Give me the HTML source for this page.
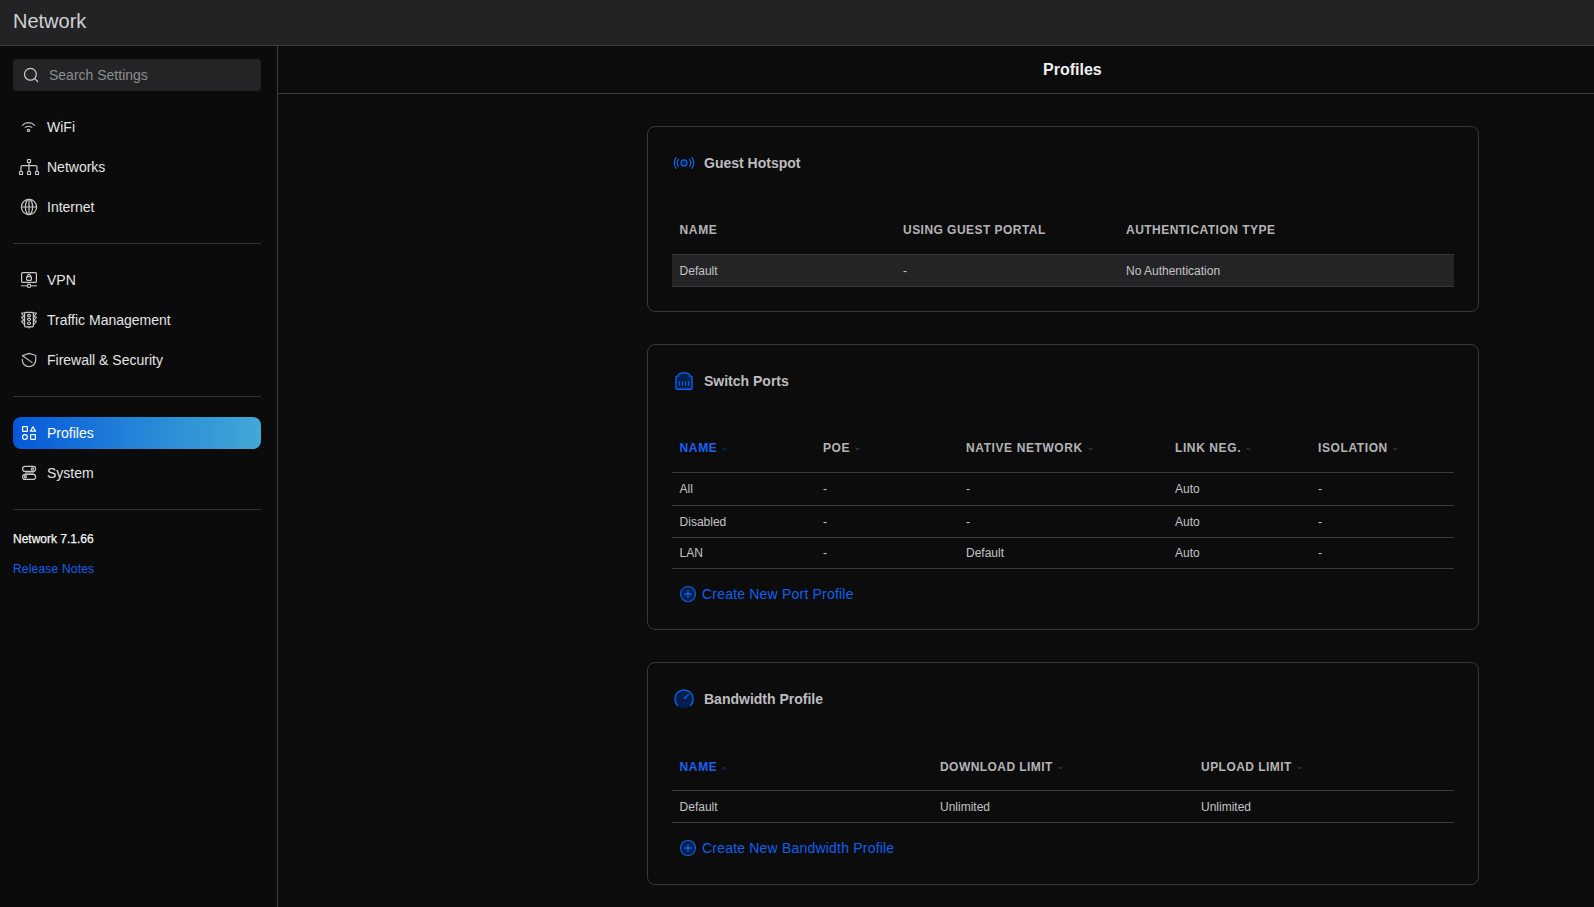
<!DOCTYPE html>
<html><head><meta charset="utf-8">
<style>
*{box-sizing:border-box;margin:0;padding:0}
html,body{width:1594px;height:907px;overflow:hidden;background:#0c0c0c;font-family:"Liberation Sans",sans-serif;color:#c8c8c8}
.abs{position:absolute}
#hdr{left:0;top:0;width:1594px;height:46px;background:#232325;border-bottom:1px solid #3b3b40}
#hdr .t{left:13px;top:9px;font-size:20px;color:#d0d1d4;line-height:24px}
#side{left:0;top:46px;width:278px;height:861px;background:#0b0b0b;border-right:1px solid #3b3b40}
#search{left:13px;top:59px;width:248px;height:32px;background:#242426;border-radius:4px}
#search .ph{left:36px;top:8px;font-size:14px;line-height:16px;color:#8c8d90}
.nav{left:13px;width:248px;height:32px;font-size:14px;line-height:32px;color:#e4e4e6}
.nav span{position:absolute;left:34px;top:0}
.nav svg{position:absolute;left:6px;top:8px}
.div{left:13px;width:248px;height:1px;background:#343438}
#active{background:linear-gradient(90deg,#0558d8 0%,#2484d8 50%,#42a8d6 100%);border-radius:8px;color:#fff}
#ver{left:13px;top:532px;font-size:12px;line-height:14px;color:#f6f6f6;-webkit-text-stroke:0.25px #f6f6f6}
#rel{left:13px;top:562px;font-size:12px;line-height:14px;color:#0f60f0;letter-spacing:0.2px}
#mh{left:278px;top:46px;width:1316px;height:48px;border-bottom:1px solid #3b3b40}
#mh .t{left:765px;top:15px;font-size:16px;line-height:18px;font-weight:bold;color:#f0f0f0}
.card{left:647px;width:832px;border:1px solid #38383c;border-radius:8px;background:#0c0c0c}
.ct{font-size:14px;font-weight:bold;color:#bdbdc0;line-height:16px}
.th{font-size:12px;font-weight:bold;letter-spacing:0.6px;color:#b4b4b6;line-height:14px}
.th.blue{color:#1a62f0}
.td{font-size:12px;color:#c4c4c6;line-height:14px}
.line{height:1px;background:#3a3a3e}
.link{font-size:14px;line-height:16px;color:#0f60f0;letter-spacing:0.2px}
.cr{margin-left:5px;vertical-align:1px}
</style></head><body>
<div id="hdr" class="abs"><div class="t abs">Network</div></div>
<div id="side" class="abs"></div>
<div id="search" class="abs">
  
  <div class="ph abs">Search Settings</div>
</div>

<div class="nav abs" style="top:111px"><span>WiFi</span></div>
<div class="nav abs" style="top:151px"><span>Networks</span></div>
<div class="nav abs" style="top:191px"><span>Internet</span></div>
<div class="div abs" style="top:243px"></div>
<div class="nav abs" style="top:264px"><span>VPN</span></div>
<div class="nav abs" style="top:304px"><span>Traffic Management</span></div>
<div class="nav abs" style="top:344px"><span>Firewall &amp; Security</span></div>
<div class="div abs" style="top:396px"></div>
<div id="active" class="nav abs" style="top:417px"><span>Profiles</span></div>
<div class="nav abs" style="top:457px"><span>System</span></div>
<div class="div abs" style="top:509px"></div>
<div id="ver" class="abs">Network 7.1.66</div>
<div id="rel" class="abs">Release Notes</div>

<div id="mh" class="abs"><div class="t abs">Profiles</div></div>

<!-- card 1 -->
<div class="card abs" style="top:126px;height:186px"></div>
<div class="ct abs" style="left:704px;top:155px">Guest Hotspot</div>
<div class="th abs" style="left:679.6px;top:223px">NAME</div>
<div class="th abs" style="left:903px;top:223px;letter-spacing:0.46px">USING GUEST PORTAL</div>
<div class="th abs" style="left:1126px;top:223px;letter-spacing:0.47px">AUTHENTICATION TYPE</div>
<div class="abs" style="left:672px;top:254px;width:782px;height:33px;background:#242426;border-top:1px solid #38383c;border-bottom:1px solid #38383c"></div>
<div class="td abs" style="left:679.6px;top:264px">Default</div>
<div class="td abs" style="left:903px;top:264px">-</div>
<div class="td abs" style="left:1126px;top:264px">No Authentication</div>

<!-- card 2 -->
<div class="card abs" style="top:344px;height:286px"></div>
<div class="ct abs" style="left:704px;top:373px">Switch Ports</div>
<div class="th abs blue" style="left:679.6px;top:441px">NAME<svg class="cr" width="5" height="4" viewBox="0 0 5 4"><path d="M0.5 3.3 L2.5 1.1 L4.5 3.3" fill="none" stroke="#0d3f9a" stroke-width="1"/></svg></div>
<div class="th abs" style="left:823px;top:441px">POE<svg class="cr" width="5" height="4" viewBox="0 0 5 4"><path d="M0.5 0.7 L2.5 2.9 L4.5 0.7" fill="none" stroke="#4e4e52" stroke-width="1"/></svg></div>
<div class="th abs" style="left:966px;top:441px">NATIVE NETWORK<svg class="cr" width="5" height="4" viewBox="0 0 5 4"><path d="M0.5 0.7 L2.5 2.9 L4.5 0.7" fill="none" stroke="#4e4e52" stroke-width="1"/></svg></div>
<div class="th abs" style="left:1175px;top:441px">LINK NEG.<svg class="cr" width="5" height="4" viewBox="0 0 5 4"><path d="M0.5 0.7 L2.5 2.9 L4.5 0.7" fill="none" stroke="#4e4e52" stroke-width="1"/></svg></div>
<div class="th abs" style="left:1318px;top:441px">ISOLATION<svg class="cr" width="5" height="4" viewBox="0 0 5 4"><path d="M0.5 0.7 L2.5 2.9 L4.5 0.7" fill="none" stroke="#4e4e52" stroke-width="1"/></svg></div>
<div class="line abs" style="left:672px;top:472px;width:782px"></div>
<div class="line abs" style="left:672px;top:505px;width:782px"></div>
<div class="line abs" style="left:672px;top:537px;width:782px"></div>
<div class="line abs" style="left:672px;top:568px;width:782px"></div>
<div class="td abs" style="left:679.6px;top:482px">All</div>
<div class="td abs" style="left:823px;top:482px">-</div>
<div class="td abs" style="left:966px;top:482px">-</div>
<div class="td abs" style="left:1175px;top:482px">Auto</div>
<div class="td abs" style="left:1318px;top:482px">-</div>
<div class="td abs" style="left:679.6px;top:515px">Disabled</div>
<div class="td abs" style="left:823px;top:515px">-</div>
<div class="td abs" style="left:966px;top:515px">-</div>
<div class="td abs" style="left:1175px;top:515px">Auto</div>
<div class="td abs" style="left:1318px;top:515px">-</div>
<div class="td abs" style="left:679.6px;top:546px">LAN</div>
<div class="td abs" style="left:823px;top:546px">-</div>
<div class="td abs" style="left:966px;top:546px">Default</div>
<div class="td abs" style="left:1175px;top:546px">Auto</div>
<div class="td abs" style="left:1318px;top:546px">-</div>
<div class="link abs" style="left:702px;top:586px">Create New Port Profile</div>

<!-- card 3 -->
<div class="card abs" style="top:662px;height:223px"></div>
<div class="ct abs" style="left:704px;top:691px">Bandwidth Profile</div>
<div class="th abs blue" style="left:679.6px;top:760px">NAME<svg class="cr" width="5" height="4" viewBox="0 0 5 4"><path d="M0.5 3.3 L2.5 1.1 L4.5 3.3" fill="none" stroke="#0d3f9a" stroke-width="1"/></svg></div>
<div class="th abs" style="left:940px;top:760px;letter-spacing:0.44px">DOWNLOAD LIMIT<svg class="cr" width="5" height="4" viewBox="0 0 5 4"><path d="M0.5 0.7 L2.5 2.9 L4.5 0.7" fill="none" stroke="#4e4e52" stroke-width="1"/></svg></div>
<div class="th abs" style="left:1201px;top:760px;letter-spacing:0.46px">UPLOAD LIMIT<svg class="cr" width="5" height="4" viewBox="0 0 5 4"><path d="M0.5 0.7 L2.5 2.9 L4.5 0.7" fill="none" stroke="#4e4e52" stroke-width="1"/></svg></div>
<div class="line abs" style="left:672px;top:790px;width:782px"></div>
<div class="line abs" style="left:672px;top:822px;width:782px"></div>
<div class="td abs" style="left:679.6px;top:800px">Default</div>
<div class="td abs" style="left:940px;top:800px">Unlimited</div>
<div class="td abs" style="left:1201px;top:800px">Unlimited</div>
<div class="link abs" style="left:702px;top:840px">Create New Bandwidth Profile</div>

<svg class="abs" style="left:0;top:0" width="278" height="907" viewBox="0 0 278 907" fill="none" stroke="#c9c9cc" stroke-width="1.2" stroke-linecap="round" stroke-linejoin="round">
 <!-- search -->
 <circle cx="30.4" cy="74.3" r="5.9"/><path d="M34.8 78.7 L37.6 81.5"/>
 <!-- wifi -->
 <path d="M22.4 125.3 A8.4 8.4 0 0 1 34.6 125.3" stroke-width="1.1"/><path d="M25.2 127.4 A6 6 0 0 1 31.8 127.4" stroke-width="1.1"/><circle cx="28.5" cy="130.4" r="1.1"/>
 <!-- networks -->
 <rect x="27.5" y="159.5" width="3" height="3" rx="0.6"/><path d="M29 163 V171"/><path d="M21 171 V167 Q21 165.6 22.4 165.6 H35.6 Q37 165.6 37 167 V171"/>
 <rect x="19.5" y="171.5" width="3" height="3" rx="0.6"/><rect x="27.5" y="171.5" width="3" height="3" rx="0.6"/><rect x="35.5" y="171.5" width="3" height="3" rx="0.6"/>
 <!-- globe -->
 <circle cx="29" cy="207" r="7.6"/><ellipse cx="29" cy="207" rx="3.6" ry="7.6"/><path d="M21.5 207 H36.5 M29 199.5 V214.5"/>
 <!-- vpn -->
 <rect x="21.6" y="272.6" width="14.8" height="9.8" rx="1"/><rect x="26.6" y="276.6" width="4.8" height="3.8" rx="0.8"/><path d="M27.6 276.6 V275.8 A1.4 1.4 0 0 1 30.4 275.8 V276.6"/>
 <path d="M21.5 285.8 H27.2 M30.8 285.8 H36.5" stroke="#8a8a8d" stroke-width="1.4"/><circle cx="29" cy="285.8" r="1.7"/>
 <!-- traffic -->
 <rect x="24.6" y="312.4" width="8.8" height="14.4" rx="1"/>
 <ellipse cx="29" cy="315.5" rx="1.6" ry="1.2"/><ellipse cx="29" cy="319.3" rx="1.6" ry="1.2"/><ellipse cx="29" cy="323.2" rx="1.6" ry="1.2"/>
 <path d="M24.5 313 H21.6 Q22 315 24.5 316.4 M24.5 317 H21.6 Q22 319 24.5 320.4 M24.5 321 H21.6 Q22 323 24.5 324.4"/>
 <path d="M33.5 313 H36.4 Q36 315 33.5 316.4 M33.5 317 H36.4 Q36 319 33.5 320.4 M33.5 321 H36.4 Q36 323 33.5 324.4"/>
 <path d="M29 327 V328"/>
 <!-- firewall -->
 <path d="M22.4 355.7 L29 353.4 L35.7 355.3 V360 A6.7 6.7 0 0 1 22.3 360 V359.2" stroke-width="1.1" stroke-linejoin="miter"/><path d="M22.6 355.8 L31.9 362.4" stroke-width="1.1"/>
 <!-- profiles -->
 <g stroke="#ffffff">
 <rect x="22.6" y="426.6" width="4.8" height="4.8" rx="0.6"/><path d="M33 426.8 L35.6 431.2 H30.4 Z"/><circle cx="24.9" cy="437.1" r="2.4"/><rect x="30.6" y="434.6" width="4.8" height="4.8" rx="0.6"/>
 </g>
 <!-- system -->
 <rect x="25" y="471.3" width="9" height="2.8" fill="#6a6a6c" stroke="none"/>
 <rect x="22.6" y="466.4" width="13" height="5" rx="2.5"/><rect x="22.6" y="474.4" width="13" height="5" rx="2.5"/>
 <circle cx="32.4" cy="469" r="1.1"/><circle cx="25.4" cy="476.8" r="1.1"/>
</svg>
<svg class="abs" style="left:0;top:0" width="1594" height="907" viewBox="0 0 1594 907" fill="none" stroke="#0f63ea" stroke-width="1.2" stroke-linecap="round" stroke-linejoin="round">
 <!-- hotspot -->
 <path d="M676.3 157.4 A8.56 8.56 0 0 0 676.3 168.4 M678.6 159.4 A4.83 4.83 0 0 0 678.6 166.4 M691.7 157.4 A8.56 8.56 0 0 1 691.7 168.4 M689.4 159.4 A4.83 4.83 0 0 1 689.4 166.4"/>
 <circle cx="684" cy="162.9" r="3" fill="#00204f"/>
 <!-- switch -->
 <path d="M676 388.4 V377 Q676 376.1 676.9 376.1 H678.4 V374.6 L681.5 372.8 H686.5 L689.6 374.6 V376.1 H691.1 Q692 376.1 692 377 V388.4 Q692 389.2 691.1 389.2 H676.9 Q676 389.2 676 388.4 Z" fill="#00204f" stroke-width="1.35" stroke-linejoin="miter"/>
 <path d="M679.6 381.3 V385.7 M682.5 381.3 V385.7 M685.5 381.3 V385.7 M688.5 381.3 V385.7" stroke-width="1" stroke-linecap="butt"/>
 <!-- bandwidth -->
 <circle cx="684" cy="699" r="9.3" fill="#00204f" stroke="none"/>
 <path d="M677.5 705.5 A9.2 9.2 0 1 1 690.5 705.5" stroke-width="1.3"/>
 <path d="M684.4 698.5 L688.5 694.3"/>
 <!-- plus 1 -->
 <circle cx="688" cy="594" r="7.5" fill="#00204f" stroke-width="1.1"/><path d="M684.2 594 H691.8 M688 590.2 V597.8" stroke-width="1.4" stroke-linecap="butt"/>
 <!-- plus 2 -->
 <circle cx="688" cy="848" r="7.5" fill="#00204f" stroke-width="1.1"/><path d="M684.2 848 H691.8 M688 844.2 V851.8" stroke-width="1.4" stroke-linecap="butt"/>
</svg>
</body></html>
